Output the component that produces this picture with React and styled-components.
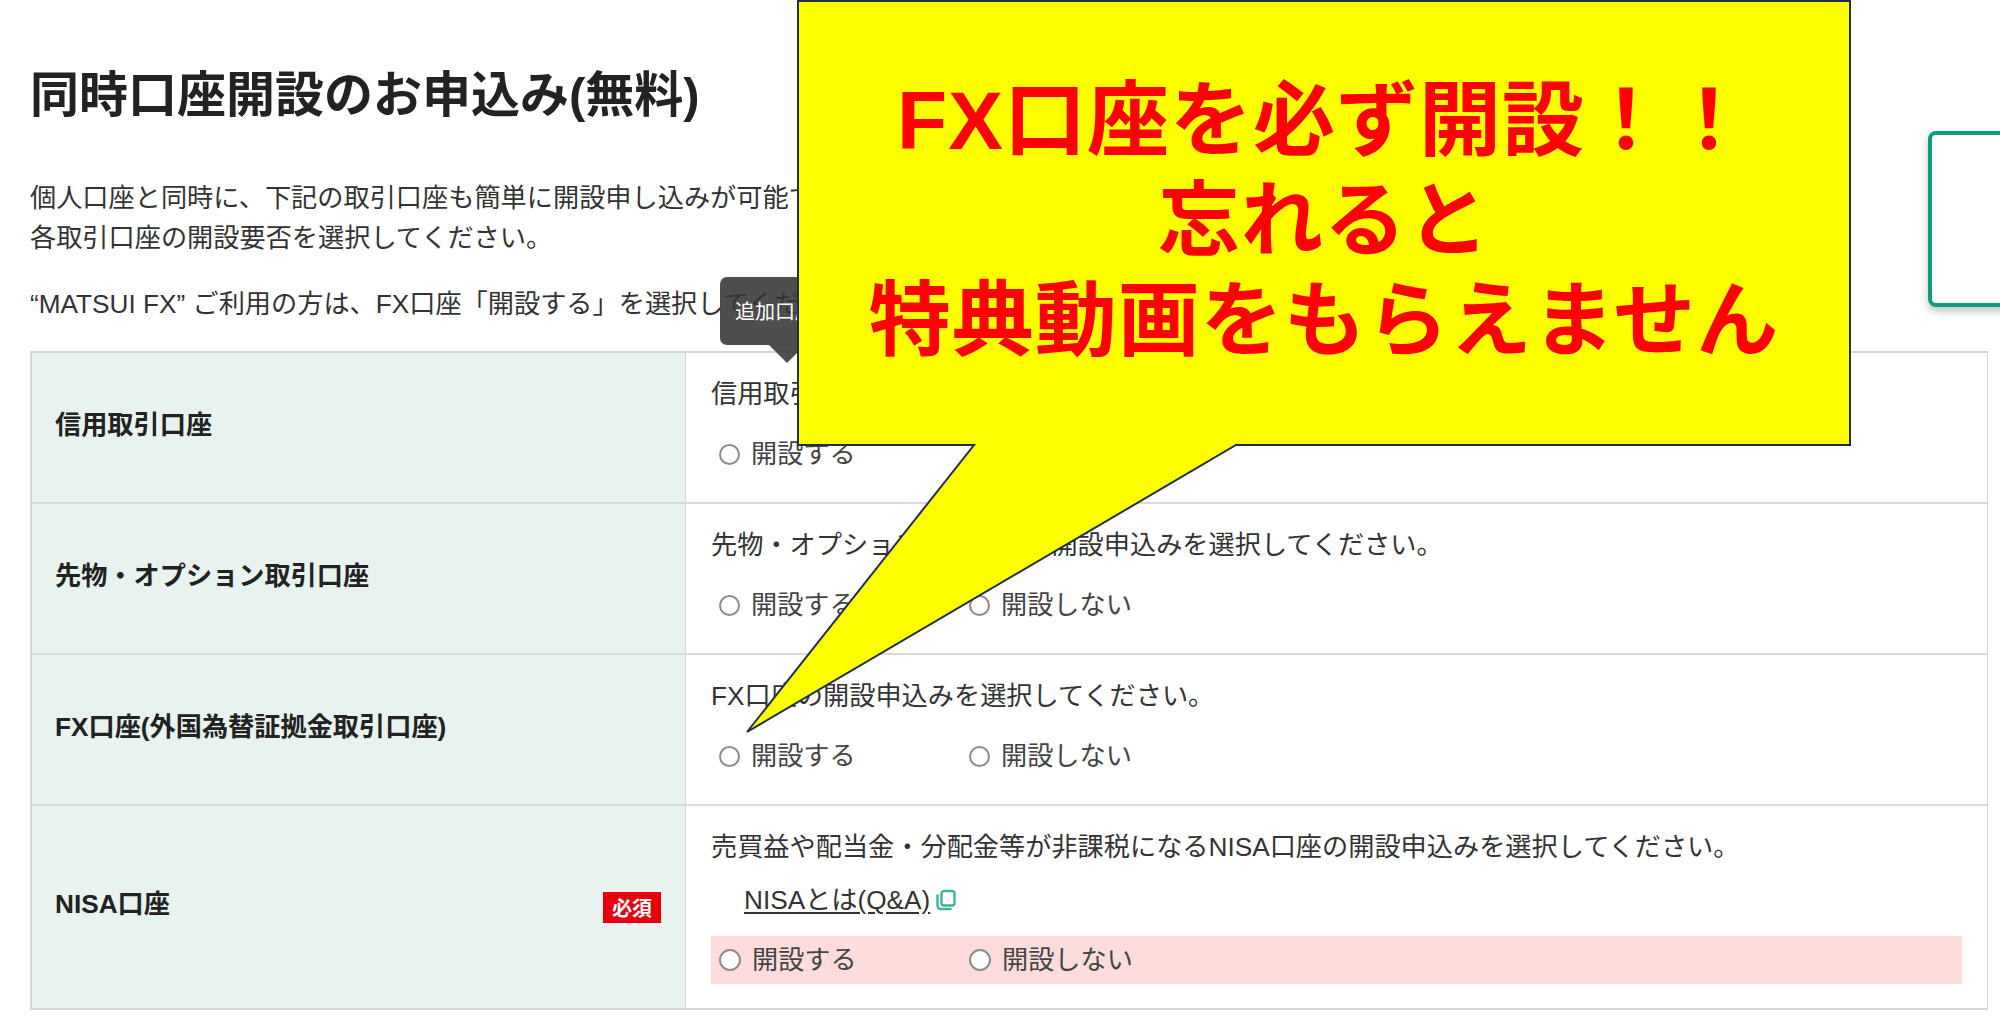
import React from "react";
import styled, { createGlobalStyle } from "styled-components";

const GlobalStyle = createGlobalStyle`
  html, body { margin: 0; padding: 0; background: #fff; }
  body {
    width: 2000px;
    height: 1027px;
    overflow: hidden;
    font-family: "Liberation Sans", "Noto Sans CJK JP", sans-serif;
    color: #333;
  }
`;

const Page = styled.main`
  position: relative;
  width: 2000px;
  height: 1027px;
  box-sizing: border-box;
  padding: 65px 12px 0 30px;
  overflow: hidden;
`;

const Title = styled.h1`
  margin: 0 0 53px;
  font-size: 49px;
  line-height: 60px;
  font-weight: 700;
  color: #222;
`;

const Lead = styled.p`
  margin: 0 0 ${(p) => p.$gap}px;
  font-size: 26.2px;
  line-height: 40px;
  white-space: nowrap;
`;

const Table = styled.section`
  border: 1px solid #d6d6d6;
  border-top-width: 2px;
  border-bottom-width: 2px;
  border-left-width: 2px;
`;

const Row = styled.div`
  display: grid;
  grid-template-columns: 654px 1fr;
  & + & {
    border-top: 2px solid #d9d9d9;
  }
`;

const Head = styled.div`
  display: flex;
  align-items: center;
  justify-content: space-between;
  padding: 0 24px 10px 23px;
  background: #e8f3ef;
  border-right: 1px solid #cfd6d3;
  font-size: 26.2px;
  font-weight: 700;
  color: #222;
`;

const Badge = styled.span`
  display: flex;
  align-items: center;
  justify-content: center;
  width: 58px;
  height: 31px;
  margin-top: 10px;
  background: #e8000f;
  color: #fff;
  font-size: 20px;
  font-weight: 700;
  font-family: "Noto Sans CJK JP", sans-serif;
`;

const Body = styled.div`
  padding: 22px 25px 24px 25px;
  display: flex;
  flex-direction: column;
  gap: 17px;
`;

const Desc = styled.div`
  font-size: 26.2px;
  line-height: 38px;
  white-space: nowrap;
`;

const LinkLine = styled.div`
  display: flex;
  align-items: center;
  gap: 6px;
  margin: -2px 0 0 33px;
  font-size: 26.2px;
  line-height: 38px;
`;

const TextLink = styled.a`
  color: #333;
  text-decoration: underline;
  text-underline-offset: 3px;
`;

const Options = styled.div`
  display: flex;
  align-items: center;
  height: 48px;
  padding-left: 8px;
  background: ${(p) => (p.$error ? "#ffdcdc" : "transparent")};
`;

const Option = styled.label`
  display: flex;
  align-items: center;
  gap: 11px;
  width: 250px;
  font-size: 26.2px;
  color: #444;
`;

const OptionText = styled.span`
  margin-top: -5px;
`;

const Radio = styled.input.attrs({ type: "radio" })`
  appearance: none;
  flex: none;
  box-sizing: border-box;
  width: ${(p) => (p.$large ? 22 : 21)}px;
  height: ${(p) => (p.$large ? 22 : 21)}px;
  margin: 0;
  background: #fff;
  border: 2px solid #8c8c8c;
  border-radius: 50%;
`;

const Tooltip = styled.div`
  position: absolute;
  left: 720px;
  top: 277px;
  width: 200px;
  height: 68px;
  box-sizing: border-box;
  padding: 22px 15px 0;
  background: rgba(54, 54, 54, 0.88);
  border-radius: 7px;
  color: #fff;
  font-size: 20px;
  line-height: 26px;
  white-space: nowrap;
  &::after {
    content: "";
    position: absolute;
    left: 49px;
    top: 68px;
    border-top: 18px solid rgba(54, 54, 54, 0.88);
    border-left: 18px solid transparent;
    border-right: 18px solid transparent;
  }
`;

const SideCard = styled.aside`
  position: absolute;
  left: 1928px;
  top: 131px;
  width: 120px;
  height: 176px;
  box-sizing: border-box;
  background: #fff;
  border: 4px solid #0f9d80;
  border-radius: 8px;
  box-shadow: 0 4px 8px rgba(0, 0, 0, 0.25);
`;

const Callout = styled.div`
  position: absolute;
  left: 796px;
  top: 0;
  width: 1056px;
  height: 736px;
`;

const CalloutShape = styled.svg`
  position: absolute;
  inset: 0;
  width: 100%;
  height: 100%;
  overflow: visible;
`;

const CalloutText = styled.div`
  position: relative;
  display: flex;
  flex-direction: column;
  align-items: center;
  padding-top: 71px;
  color: #ff0000;
  font-size: 82px;
  line-height: 100px;
  font-weight: 700;
  letter-spacing: 1px;
  white-space: nowrap;
`;

const ExternalIcon = () => (
  <svg width="20" height="22" viewBox="0 0 20 22" fill="none" stroke="#3fb39c" strokeWidth="2.4">
    <rect x="5.5" y="2" width="13" height="14.5" rx="2.5" />
    <path d="M1.5 5.5v11.5a3 3 0 0 0 3 3h11" />
  </svg>
);

const rows = [
  { label: "信用取引口座", desc: "信用取引口座の開設申込みを選択してください。" },
  { label: "先物・オプション取引口座", desc: "先物・オプション取引口座の開設申込みを選択してください。" },
  { label: "FX口座(外国為替証拠金取引口座)", desc: "FX口座の開設申込みを選択してください。" },
  {
    label: "NISA口座",
    desc: "売買益や配当金・分配金等が非課税になるNISA口座の開設申込みを選択してください。",
    required: true,
    link: "NISAとは(Q&A)",
    error: true,
  },
];

export default function App() {
  return (
    <Page>
      <GlobalStyle />
      <Title>同時口座開設のお申込み(無料)</Title>
      <Lead $gap={26}>
        個人口座と同時に、下記の取引口座も簡単に開設申し込みが可能です。
        <br />
        各取引口座の開設要否を選択してください。
      </Lead>
      <Lead $gap={27}>“MATSUI FX” ご利用の方は、FX口座「開設する」を選択してください。</Lead>
      <Table>
        {rows.map((row, i) => (
          <Row key={row.label}>
            <Head>
              {row.label}
              {row.required && <Badge>必須</Badge>}
            </Head>
            <Body>
              <Desc>{row.desc}</Desc>
              {row.link && (
                <LinkLine>
                  <TextLink href="#">{row.link}</TextLink>
                  <ExternalIcon />
                </LinkLine>
              )}
              <Options $error={row.error}>
                <Option>
                  <Radio name={`r${i}`} $large={row.error} />
                  <OptionText>開設する</OptionText>
                </Option>
                <Option>
                  <Radio name={`r${i}`} $large={row.error} />
                  <OptionText>開設しない</OptionText>
                </Option>
              </Options>
            </Body>
          </Row>
        ))}
      </Table>
      <Tooltip>追加口座の開設</Tooltip>
      <SideCard />
      <Callout>
        <CalloutShape viewBox="0 0 1056 736">
          <polygon
            points="2,1 1054,1 1054,445 440,445 -49,732 178,445 2,445"
            fill="#ffff00"
            stroke="#1f2f50"
            strokeWidth="2"
          />
        </CalloutShape>
        <CalloutText>
          <span>FX口座を必ず開設！！</span>
          <span>忘れると</span>
          <span>特典動画をもらえません</span>
        </CalloutText>
      </Callout>
    </Page>
  );
}
